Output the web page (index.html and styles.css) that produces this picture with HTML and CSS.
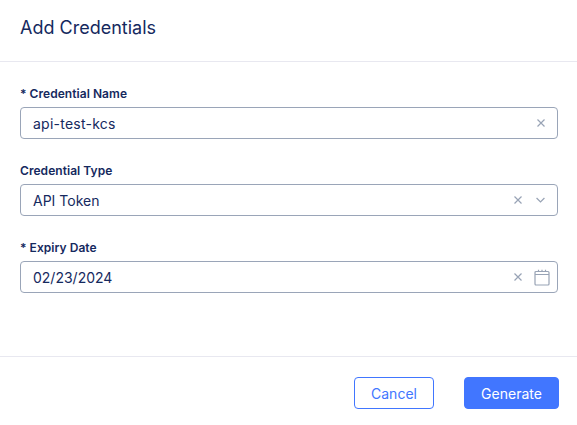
FILE: index.html
```html
<!DOCTYPE html>
<html lang="en">
<head>
<meta charset="utf-8">
<title>Add Credentials</title>
<link rel="stylesheet" href="styles.css">
</head>
<body>
<div class="dialog">
  <header class="head"><h1 class="title">Add Credentials</h1></header>
  <main class="body">
    <div class="field">
      <label class="label">* Credential Name</label>
      <div class="control">
        <span class="value wide">api-test-kcs</span>
        <svg class="icon clear" viewBox="0 0 8 8"><path d="M.5.5l7 7M7.5.5l-7 7"/></svg>
      </div>
    </div>
    <div class="field">
      <label class="label">Credential Type</label>
      <div class="control">
        <span class="value">API Token</span>
        <svg class="icon clear" viewBox="0 0 8 8"><path d="M.5.5l7 7M7.5.5l-7 7"/></svg>
        <svg class="icon chevron" viewBox="0 0 8 5"><path d="M.5.7L4 4.2 7.5.7"/></svg>
      </div>
    </div>
    <div class="field">
      <label class="label">* Expiry Date</label>
      <div class="control date">
        <span class="value">02/23/2024</span>
        <svg class="icon clear" viewBox="0 0 8 8"><path d="M.5.5l7 7M7.5.5l-7 7"/></svg>
        <svg class="icon cal" viewBox="0 0 16 17"><path d="M2 2.500h12a1 1 0 0 1 1 1V15a1 1 0 0 1-1 1H2a1 1 0 0 1-1-1V3.500a1 1 0 0 1 1-1zM1 5.500h14M4.500 .8v1.700M8 .8v1.700M11.500 .8v1.700"/></svg>
      </div>
    </div>
  </main>
  <footer class="foot">
    <button class="btn cancel">Cancel</button>
    <button class="btn primary">Generate</button>
  </footer>
</div>
</body>
</html>
```
FILE: styles.css
```css
* { box-sizing: border-box; }
html, body { margin: 0; height: 100%; background: #fff; }
body { font-family: Inter, "Liberation Sans", sans-serif; color: #15295e; overflow: hidden; }
.dialog { width: 577px; height: 425px; display: flex; flex-direction: column; }
.head { height: 62px; padding: 0 20px 6px; display: flex; align-items: center; border-bottom: 1px solid #e8e8f0; }
.title { margin: 0; font-size: 18px; font-weight: 400; color: #15295e; }
.body { flex: none; height: 294px; padding: 24px 19px 0 20px; display: flex; flex-direction: column; gap: 24px; }
.field { display: flex; flex-direction: column; gap: 6px; }
.label { font-size: 12px; line-height: 15px; font-weight: 600; color: #15295e; letter-spacing: .05px; }
.control { height: 32px; border: 1px solid #9aa5b8; border-radius: 4px; display: flex; align-items: center; padding: 0 12px; gap: 13px; }
.date { padding-right: 7px; gap: 12px; }
.value { flex: 1; font-size: 14px; color: #15295e; }
.wide { letter-spacing: .25px; }
.icon { fill: none; stroke: #98a3b5; }
.clear { width: 8px; height: 8px; stroke-width: 1.2; }
.chevron { width: 9px; height: 6px; stroke-width: 1.1; margin-left: 1px; }
.cal { width: 16px; height: 17px; stroke-width: 1.2; }
.foot { border-top: 1px solid #e8e8f0; flex: 1; display: flex; justify-content: flex-end; align-items: flex-start; gap: 30px; padding: 20px 18px 0 0; }
.btn { height: 32px; border-radius: 4px; font-family: inherit; font-size: 14px; border: 1px solid #4176ff; }
.cancel { width: 80px; background: #fff; color: #4176ff; }
.primary { width: 95px; background: #4176ff; color: #fff; }
```
